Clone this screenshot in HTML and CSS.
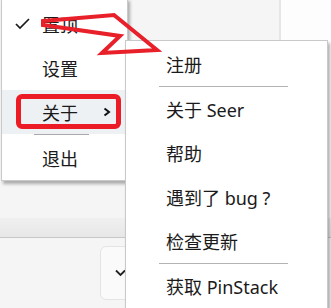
FILE: index.html
```html
<!DOCTYPE html>
<html lang="zh-CN">
<head>
    <meta charset="UTF-8">
    <meta name="viewport" content="width=device-width, initial-scale=1.0">
    <title>Seer 菜单</title>
    <link rel="stylesheet" href="styles.css">
</head>
<body>

    <div class="screen">

        <!-- window behind the menus -->
        <div class="backdrop">
            <div class="upper">
                <div class="pane"></div>
                <div class="pane pane-light"></div>
            </div>
            <div class="toolbar"></div>
            <div class="lower">
                <div class="dropdown">
                    <svg width="11" height="8" viewBox="0 0 11 8"><polyline points="1,1.5 5.5,6 10,1.5" fill="none" stroke="#222" stroke-width="1.8"/></svg>
                </div>
            </div>
        </div>

        <ul class="menu menu-main">
            <li class="item">
                <span class="slot">
                    <svg width="15" height="12" viewBox="0 0 15 12"><polyline points="1,6 5,10 14,1" fill="none" stroke="#1a1a1a" stroke-width="1.7"/></svg>
                </span>
                置顶
            </li>
            <li class="item"><span class="slot"></span>设置</li>
            <li class="item item-active">
                <span class="slot"></span>关于
                <svg class="more" width="8" height="10" viewBox="0 0 8 10"><polyline points="1.5,1.5 6,5 1.5,8.5" fill="none" stroke="#111" stroke-width="2"/></svg>
            </li>
            <li class="sep"></li>
            <li class="item"><span class="slot"></span>退出</li>
        </ul>

        <ul class="menu menu-sub">
            <li class="item">注册</li>
            <li class="sep"></li>
            <li class="item">关于 Seer</li>
            <li class="item">帮助</li>
            <li class="item">遇到了 bug ?</li>
            <li class="item">检查更新</li>
            <li class="sep"></li>
            <li class="item">获取 PinStack</li>
        </ul>

        <!-- red annotations -->
        <div class="mark"></div>
        <svg class="arrow" width="331" height="80" viewBox="0 0 331 80">
            <polygon points="43,21 114,15 157,50 102,53 120,36 43,25" fill="none" stroke="#e8202a" stroke-width="4" stroke-linejoin="miter"/>
        </svg>
    </div>

</body>
</html>
```

FILE: styles.css
```css
body {
    margin: 0;
    font-family: "Noto Sans", "Noto Sans CJK SC", sans-serif;
    color: #1a1a1a;
}
.screen {
    position: relative;
    width: 331px;
    height: 308px;
    overflow: hidden;
}

/* backdrop window */
.backdrop {
    display: flex;
    flex-direction: column;
    height: 100%;
}
.upper {
    display: flex;
    height: 218px;
}
.pane {
    width: 279px;
    background-color: #f5f5f5;
    border-right: 2px solid #e6e6e6;
}
.pane-light {
    flex: 1;
    width: auto;
    border: none;
    background-color: #fdfdfd;
}
.toolbar {
    height: 19px;
    background: linear-gradient(#f0f0f0, #e7e7e7);
    border-bottom: 1px solid #c8c8c8;
}
.lower {
    flex: 1;
    background-color: #f5f5f5;
    padding: 8px 0 0 100px;
}
.dropdown {
    width: 40px;
    height: 54px;
    box-sizing: border-box;
    padding-left: 14px;
    display: flex;
    align-items: center;
    background-color: #fafafa;
    border: 1px solid #e4e4e4;
    border-radius: 6px;
}

/* menus */
.menu {
    position: absolute;
    list-style: none;
    margin: 0;
    box-sizing: border-box;
    background-color: #fff;
    border: 1px solid #c9c9c9;
    font-size: 18px;
}
.menu-main {
    left: 1px;
    top: -2px;
    width: 127px;
    padding: 3px 0 0 0;
    box-shadow: 2px 3px 3px rgba(0,0,0,0.3);
}
.menu-sub {
    left: 125px;
    top: 40px;
    width: 203px;
    height: 300px;
    padding: 1px 0 0 0;
    box-shadow: 2px 3px 3px rgba(0,0,0,0.3);
}
.item {
    display: flex;
    align-items: center;
    height: 44px;
    padding-left: 40px;
    white-space: nowrap;
}
.menu-main .item {
    padding-left: 13px;
}
.slot {
    width: 27px;
    display: flex;
    align-items: center;
}
.item-active {
    background-color: #eef1f4;
}
.more {
    margin-left: auto;
    margin-right: 16px;
}
.sep {
    height: 1px;
    background-color: #b3b3b3;
    margin: 0 39px 0 33px;
}
.menu-main .sep {
    width: 55px;
    margin: 0 0 1px 32px;
    background-color: #a9a9a9;
}

/* annotations */
.mark {
    position: absolute;
    left: 16px;
    top: 94px;
    width: 105px;
    height: 35px;
    box-sizing: border-box;
    border: 5px solid #ec1c26;
    border-radius: 6px;
}
.arrow {
    position: absolute;
    left: 0;
    top: 0;
}
```
